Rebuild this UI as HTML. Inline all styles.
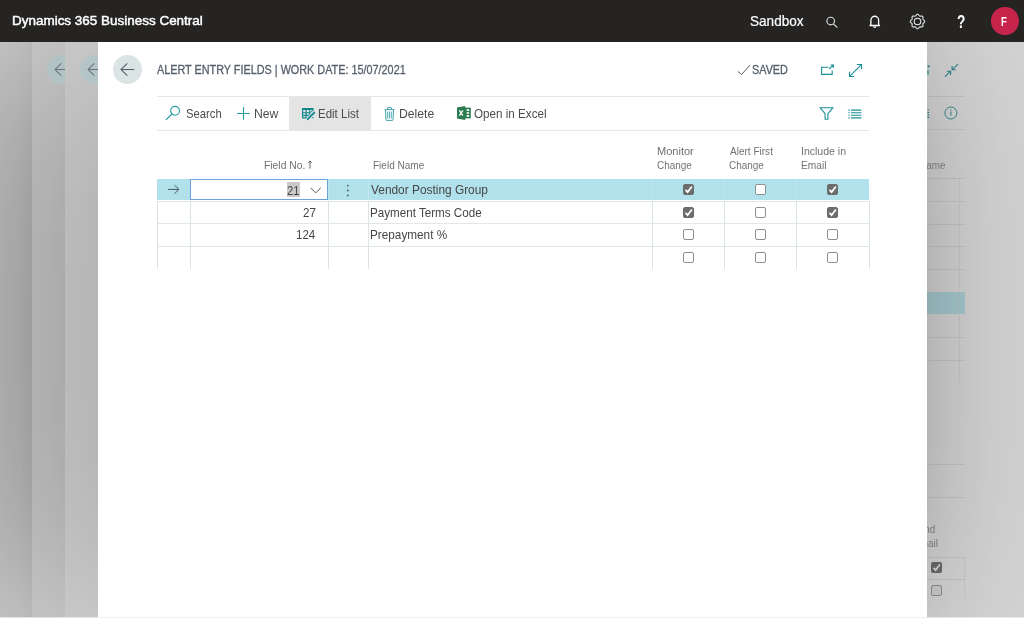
<!DOCTYPE html>
<html lang="en">
<head>
<meta charset="utf-8">
<title>Alert Entry Fields - Dynamics 365 Business Central</title>
<style>
html,body{margin:0;padding:0;}
body{width:1024px;height:618px;overflow:hidden;position:relative;background:#bdbdbd;font-family:"Liberation Sans",sans-serif;color:#212121;}
.abs{position:absolute;}
.t{position:absolute;white-space:nowrap;line-height:1;transform-origin:0 0;}
svg{position:absolute;overflow:visible;}
#topbar{left:0;top:0;width:1024px;height:42px;background:#252423;z-index:5;}
#topbar .t{color:#fff;}
#panel{left:98px;top:42px;width:829px;height:576px;background:#fff;}
.hl{position:absolute;height:1px;background:#e1e8e8;}
.vl{position:absolute;width:0;border-left:1px solid #dbe4e4;}
.vl.s{border-left:1px solid rgba(255,255,255,0.2);}
.cb{position:absolute;width:9px;height:9px;border:1px solid #8f8f8f;border-radius:2px;background:#fff;}
.cb.on{background:#6c6c6c;border-color:#6c6c6c;}
.cb svg{left:-1px;top:-1px;}
.hd{color:#717171;font-size:11px;}
.cell{color:#464646;font-size:13px;}
.act{color:#4c4c4c;font-size:13px;}
.shd{-webkit-mask-image:linear-gradient(180deg,rgba(0,0,0,0.500) 0px,rgba(0,0,0,0.595) 24px,rgba(0,0,0,0.684) 48px,rgba(0,0,0,0.764) 72px,rgba(0,0,0,0.831) 96px,rgba(0,0,0,0.885) 120px,rgba(0,0,0,0.925) 144px,rgba(0,0,0,0.953) 168px,rgba(0,0,0,0.973) 192px,rgba(0,0,0,0.984) 216px,rgba(0,0,0,0.991) 240px,rgba(0,0,0,0.995) 264px,rgba(0,0,0,0.996) 288px,rgba(0,0,0,0.995) 312px,rgba(0,0,0,0.991) 336px,rgba(0,0,0,0.984) 360px,rgba(0,0,0,0.973) 384px,rgba(0,0,0,0.953) 408px,rgba(0,0,0,0.925) 432px,rgba(0,0,0,0.885) 456px,rgba(0,0,0,0.831) 480px,rgba(0,0,0,0.764) 504px,rgba(0,0,0,0.684) 528px,rgba(0,0,0,0.595) 552px,rgba(0,0,0,0.500) 576px);mask-image:linear-gradient(180deg,rgba(0,0,0,0.500) 0px,rgba(0,0,0,0.595) 24px,rgba(0,0,0,0.684) 48px,rgba(0,0,0,0.764) 72px,rgba(0,0,0,0.831) 96px,rgba(0,0,0,0.885) 120px,rgba(0,0,0,0.925) 144px,rgba(0,0,0,0.953) 168px,rgba(0,0,0,0.973) 192px,rgba(0,0,0,0.984) 216px,rgba(0,0,0,0.991) 240px,rgba(0,0,0,0.995) 264px,rgba(0,0,0,0.996) 288px,rgba(0,0,0,0.995) 312px,rgba(0,0,0,0.991) 336px,rgba(0,0,0,0.984) 360px,rgba(0,0,0,0.973) 384px,rgba(0,0,0,0.953) 408px,rgba(0,0,0,0.925) 432px,rgba(0,0,0,0.885) 456px,rgba(0,0,0,0.831) 480px,rgba(0,0,0,0.764) 504px,rgba(0,0,0,0.684) 528px,rgba(0,0,0,0.595) 552px,rgba(0,0,0,0.500) 576px);}
</style>
</head>
<body>
<!-- background layers (stacked pages behind the dialog, dimmed, with soft edge shadows) -->
<div class="abs" id="pg0" style="left:0;top:42px;width:1024px;height:576px;background:#d6d6d6;"></div>
<div class="abs" id="peek" style="left:927px;top:42px;width:97px;height:576px;overflow:hidden;">
<div class="abs" style="left:0px;top:54px;width:38px;height:1px;background:#c3c9c9;"></div>
<div class="abs" style="left:0px;top:87.4px;width:38px;height:1px;background:#c3c9c9;"></div>
<div class="abs" style="left:0px;top:136px;width:38px;height:1px;background:#c3c9c9;"></div>
<div class="abs" style="left:0px;top:158.8px;width:38px;height:1px;background:#c3c9c9;"></div>
<div class="abs" style="left:0px;top:181.5px;width:38px;height:1px;background:#c3c9c9;"></div>
<div class="abs" style="left:0px;top:204.2px;width:38px;height:1px;background:#c3c9c9;"></div>
<div class="abs" style="left:0px;top:226.9px;width:38px;height:1px;background:#c3c9c9;"></div>
<div class="abs" style="left:0px;top:295.1px;width:38px;height:1px;background:#c3c9c9;"></div>
<div class="abs" style="left:0px;top:317.8px;width:38px;height:1px;background:#c3c9c9;"></div>
<div class="abs" style="left:0px;top:421.6px;width:38px;height:1px;background:#c3c9c9;"></div>
<div class="abs" style="left:0px;top:455.2px;width:38px;height:1px;background:#c3c9c9;"></div>
<div class="abs" style="left:0px;top:514.6px;width:38px;height:1px;background:#c3c9c9;"></div>
<div class="abs" style="left:0px;top:537px;width:38px;height:1px;background:#c3c9c9;"></div>
<div class="abs" style="left:0;top:249.7px;width:38px;height:22.8px;background:#a8cbd1;"></div>
<div class="abs" style="left:32.4px;top:136px;width:0;height:204px;border-left:1px dotted #bcc4c4;"></div>
<div class="abs" style="left:37.2px;top:515px;width:0;height:44px;border-left:1px dotted #bcc4c4;"></div>
<svg style="left:0;top:23.2px;" width="4" height="11" viewBox="0 0 4 11"><rect x="0.6" y="0.3" width="2" height="2" fill="#2f858b"/><path d="M1 5v4.8" stroke="#2f858b" stroke-width="1.1"/></svg>
<svg style="left:17px;top:21.2px;" width="15" height="15" viewBox="0 0 15 15"><path d="M0.9 13.6L6.4 8.4M2.9 8.3h3.7v3.7M14 1.2L8.3 6.6M11.8 6.7H8.1V3" fill="none" stroke="#2f858b" stroke-width="1.1"/></svg>
<svg style="left:0;top:66.7px;" width="3" height="10" viewBox="0 0 3 10"><path d="M0.5 1h1.6M0.5 3.5h1.6M0.5 5.9h1.6M0.5 8.4h1.6" stroke="#2f858b" stroke-width="1.1"/></svg>
<svg style="left:17px;top:63.7px;" width="14" height="14" viewBox="0 0 14 14"><circle cx="6.9" cy="7" r="6" fill="none" stroke="#3a8d93" stroke-width="1"/><path d="M6.9 5.6v4" stroke="#3a8d93" stroke-width="1.1"/><circle cx="6.9" cy="3.9" r="0.65" fill="#3a8d93"/></svg>
<span class="t pk" id="pk1" style="left:-7.6px;top:118px;font-size:10.7px;color:#868686;transform:scaleX(0.93);">Name</span>
<span class="t pk" id="pk2" style="left:-14.8px;top:482px;font-size:10.7px;color:#868686;transform:scaleX(0.93);">Send</span>
<span class="t pk" id="pk3" style="left:-14.3px;top:496px;font-size:10.7px;color:#868686;transform:scaleX(0.93);">Email</span>
<div class="abs" style="left:4px;top:520.1px;width:11px;height:11px;border-radius:2px;background:#6b6b6b;"><svg style="left:0;top:0" width="11" height="11" viewBox="0 0 11 11"><path d="M2.5 5.9L4.6 8.1 8.9 2.6" fill="none" stroke="#dedede" stroke-width="1.7"/></svg></div>
<div class="abs" style="left:4px;top:542.8px;width:9px;height:9px;border:1px solid #8e8e8e;border-radius:2px;background:#cdcdcd;"></div>
</div>
<div class="abs shd" id="sh1" style="left:0px;top:42px;width:32px;height:576px;background:linear-gradient(90deg,rgba(0,0,0,0.205) 0px,rgba(0,0,0,0.232) 20px,rgba(0,0,0,0.250) 27px,rgba(0,0,0,0.264) 32px);"></div>
<div class="abs shd" id="sh2" style="left:32px;top:42px;width:33px;height:576px;background:linear-gradient(90deg,rgba(0,0,0,0.172) 0px,rgba(0,0,0,0.190) 22px,rgba(0,0,0,0.205) 33px);"></div>
<div class="abs shd" id="sh3" style="left:65px;top:42px;width:33px;height:576px;background:linear-gradient(90deg,rgba(0,0,0,0.128) 0px,rgba(0,0,0,0.150) 33px);"></div>
<div class="abs shd" id="sh4" style="left:927px;top:42px;width:97px;height:576px;background:linear-gradient(90deg,rgba(0,0,0,0.158) 0px,rgba(0,0,0,0.139) 8px,rgba(0,0,0,0.122) 16px,rgba(0,0,0,0.107) 24px,rgba(0,0,0,0.094) 32px,rgba(0,0,0,0.083) 40px,rgba(0,0,0,0.073) 48px,rgba(0,0,0,0.064) 56px,rgba(0,0,0,0.056) 64px,rgba(0,0,0,0.049) 72px,rgba(0,0,0,0.043) 80px,rgba(0,0,0,0.038) 88px,rgba(0,0,0,0.034) 96px,rgba(0,0,0,0.033) 97px);"></div>
<div id="topbar" class="abs">
  <span class="t" id="brand" style="left:12.20px;top:13.60px;font-size:13px;font-weight:normal;-webkit-text-stroke:0.45px #fff;transform:scaleX(1.0356);">Dynamics 365 Business Central</span>
  <span class="t" id="sandbox" style="left:749.60px;top:13.50px;font-size:14.4px;-webkit-text-stroke:0.2px #fff;transform:scaleX(0.9422);">Sandbox</span>
<!-- top bar icons -->
<svg id="i-search" style="left:825px;top:15px;" width="14" height="14" viewBox="0 0 14 14"><circle cx="5.7" cy="6" r="3.8" fill="none" stroke="#dcdcdc" stroke-width="1.15"/><path d="M8.5 8.9L12.3 12.6" stroke="#dcdcdc" stroke-width="1.25" fill="none"/></svg>
<svg id="i-bell" style="left:868px;top:14px;" width="14" height="16" viewBox="0 0 14 16"><path d="M2.9 10.6V6.1a3.85 3.85 0 0 1 7.7 0v4.5l0.9 0.9H2z" fill="none" stroke="#fff" stroke-width="1.3" stroke-linejoin="round"/><path d="M5.4 12.3a1.4 1.4 0 0 0 2.7 0" fill="none" stroke="#fff" stroke-width="1.2"/></svg>
<svg id="i-gear" style="left:909px;top:12.9px;" width="17" height="17" viewBox="0 0 17 17"><circle cx="8.5" cy="8.5" r="3.3" fill="none" stroke="#efefef" stroke-width="1.05"/><path d="M15.75 8.50 L15.64 8.97 L15.34 9.40 L14.92 9.78 L14.49 10.10 L14.13 10.41 L13.90 10.74 L13.83 11.13 L13.87 11.60 L13.95 12.14 L13.97 12.70 L13.88 13.22 L13.63 13.63 L13.22 13.88 L12.70 13.97 L12.14 13.95 L11.60 13.87 L11.13 13.83 L10.74 13.90 L10.41 14.13 L10.10 14.49 L9.78 14.92 L9.40 15.34 L8.97 15.64 L8.50 15.75 L8.03 15.64 L7.60 15.34 L7.22 14.92 L6.90 14.49 L6.59 14.13 L6.26 13.90 L5.87 13.83 L5.40 13.87 L4.86 13.95 L4.30 13.97 L3.78 13.88 L3.37 13.63 L3.12 13.22 L3.03 12.70 L3.05 12.14 L3.13 11.60 L3.17 11.13 L3.10 10.74 L2.87 10.41 L2.51 10.10 L2.08 9.78 L1.66 9.40 L1.36 8.97 L1.25 8.50 L1.36 8.03 L1.66 7.60 L2.08 7.22 L2.51 6.90 L2.87 6.59 L3.10 6.26 L3.17 5.87 L3.13 5.40 L3.05 4.86 L3.03 4.30 L3.12 3.78 L3.37 3.37 L3.78 3.12 L4.30 3.03 L4.86 3.05 L5.40 3.13 L5.87 3.17 L6.26 3.10 L6.59 2.87 L6.90 2.51 L7.22 2.08 L7.60 1.66 L8.03 1.36 L8.50 1.25 L8.97 1.36 L9.40 1.66 L9.78 2.08 L10.10 2.51 L10.41 2.87 L10.74 3.10 L11.13 3.17 L11.60 3.13 L12.14 3.05 L12.70 3.03 L13.22 3.12 L13.63 3.37 L13.88 3.78 L13.97 4.30 L13.95 4.86 L13.87 5.40 L13.83 5.87 L13.90 6.26 L14.13 6.59 L14.49 6.90 L14.92 7.22 L15.34 7.60 L15.64 8.03Z" fill="none" stroke="#efefef" stroke-width="1.05" stroke-linejoin="round"/></svg>
<span class="t" id="qmark" style="left:957.3px;top:12.5px;font-size:18.5px;font-weight:bold;color:#fff;transform:scaleX(0.74);">?</span>
<div class="abs" id="avatar" style="left:991px;top:7px;width:27.5px;height:27.5px;border-radius:50%;background:#c7244b;"></div>
<span class="t" id="avF" style="left:1001px;top:15.5px;font-size:12px;font-weight:bold;color:#fff;transform:scaleX(0.8);">F</span>

</div>

<div id="panel" class="abs"></div>

<span class="t" id="title" style="left:156.59px;top:64.00px;font-size:12px;color:#56616c;-webkit-text-stroke:0.3px #56616c;transform:scaleX(0.9028);">ALERT ENTRY FIELDS | WORK DATE: 15/07/2021</span>
<span class="t" id="saved" style="left:752.43px;top:64.00px;font-size:12px;color:#56616c;-webkit-text-stroke:0.3px #56616c;transform:scaleX(0.9023);">SAVED</span>

<!-- toolbar -->
<div class="hl" style="left:157px;top:96px;width:712px;"></div>
<div class="hl" style="left:157px;top:130px;width:712px;"></div>
<div class="abs" id="editbg" style="left:289px;top:97px;width:82px;height:33px;background:#e4e4e4;"></div>
<span class="t act" id="a1" style="left:186.16px;top:108.00px;font-size:12.8px;transform:scaleX(0.8809);">Search</span>
<span class="t act" id="a2" style="left:253.60px;top:108.00px;font-size:12.8px;transform:scaleX(0.9524);">New</span>
<span class="t act" id="a3" style="left:317.85px;top:108.00px;font-size:12.8px;transform:scaleX(0.8977);">Edit List</span>
<span class="t act" id="a4" style="left:399.10px;top:108.00px;font-size:12.8px;transform:scaleX(0.9516);">Delete</span>
<span class="t act" id="a5" style="left:474.01px;top:108.00px;font-size:12.8px;transform:scaleX(0.9103);">Open in Excel</span>

<!-- column headers -->
<span class="t hd" id="h1" style="left:263.72px;top:160.00px;font-size:10.7px;transform:scaleX(0.9654);">Field No.</span>
<span class="t hd" id="h2" style="left:373.01px;top:160.00px;font-size:10.7px;transform:scaleX(0.9376);">Field Name</span>
<span class="t hd" id="h3a" style="left:656.99px;top:146.00px;font-size:10.7px;transform:scaleX(1.0322);">Monitor</span>
<span class="t hd" id="h3b" style="left:657.44px;top:160.00px;font-size:10.7px;transform:scaleX(0.9295);">Change</span>
<span class="t hd" id="h4a" style="left:729.64px;top:146.00px;font-size:10.7px;transform:scaleX(0.9388);">Alert First</span>
<span class="t hd" id="h4b" style="left:729.44px;top:160.00px;font-size:10.7px;transform:scaleX(0.9295);">Change</span>
<span class="t hd" id="h5a" style="left:800.66px;top:146.00px;font-size:10.7px;transform:scaleX(0.9844);">Include in</span>
<span class="t hd" id="h5b" style="left:800.79px;top:160.00px;font-size:10.7px;transform:scaleX(0.9507);">Email</span>

<!-- grid -->
<div class="abs" id="selrow" style="left:156.5px;top:178.6px;width:712.5px;height:21.3px;background:#b1e1eb;"></div>
<div class="hl" style="left:157px;top:200.5px;width:712px;"></div>
<div class="hl" style="left:157px;top:223.1px;width:712px;"></div>
<div class="hl" style="left:157px;top:245.8px;width:712px;"></div>
<div class="vl" style="left:156.6px;top:201px;height:68px;"></div>
<div class="vl" style="left:190.0px;top:201px;height:68px;"></div>
<div class="vl s" style="left:190.0px;top:179px;height:21px;"></div>
<div class="vl" style="left:328.2px;top:201px;height:68px;"></div>
<div class="vl s" style="left:328.2px;top:179px;height:21px;"></div>
<div class="vl" style="left:368.3px;top:201px;height:68px;"></div>
<div class="vl s" style="left:368.3px;top:179px;height:21px;"></div>
<div class="vl" style="left:652.2px;top:201px;height:68px;"></div>
<div class="vl s" style="left:652.2px;top:179px;height:21px;"></div>
<div class="vl" style="left:724.4px;top:201px;height:68px;"></div>
<div class="vl s" style="left:724.4px;top:179px;height:21px;"></div>
<div class="vl" style="left:796.3px;top:201px;height:68px;"></div>
<div class="vl s" style="left:796.3px;top:179px;height:21px;"></div>
<div class="vl" style="left:868.5px;top:201px;height:68px;"></div>
<div class="abs" id="inp" style="left:190px;top:179.2px;width:136px;height:18.7px;background:#fff;border:1px solid #6aa3dc;box-sizing:content-box;"></div>
<div class="abs" id="selhl" style="left:287.3px;top:182.1px;width:12.6px;height:15px;background:#c9c9c9;"></div>
<span class="t cell" id="c1" style="left:287.39px;top:184.50px;font-size:12.6px;transform:scaleX(0.8923);">21</span>
<span class="t cell" id="c2" style="left:302.72px;top:207.00px;font-size:12.6px;transform:scaleX(0.9231);">27</span>
<span class="t cell" id="c3" style="left:296.11px;top:229.00px;font-size:12.6px;transform:scaleX(0.9178);">124</span>
<span class="t cell" id="n1" style="left:370.70px;top:184.00px;font-size:12.6px;transform:scaleX(0.9435);">Vendor Posting Group</span>
<span class="t cell" id="n2" style="left:369.97px;top:207.00px;font-size:12.6px;transform:scaleX(0.9236);">Payment Terms Code</span>
<span class="t cell" id="n3" style="left:369.99px;top:229.00px;font-size:12.6px;transform:scaleX(0.9339);">Prepayment %</span>


<!-- back buttons on stacked pages -->
<div class="abs" style="left:32px;top:42px;width:33px;height:576px;overflow:hidden;">
  <div class="abs" style="left:14.7px;top:12.8px;width:29px;height:29px;border-radius:50%;background:#b3c3c5;"></div>
  <svg style="left:14.7px;top:12.8px;" width="29" height="29" viewBox="0 0 29 29"><path d="M21.2 14.5H8.3M14.3 8.3L8.1 14.5l6.2 6.2" fill="none" stroke="#66737a" stroke-width="1.05"/></svg>
</div>
<div class="abs" style="left:65px;top:42px;width:33px;height:576px;overflow:hidden;">
  <div class="abs" style="left:14.7px;top:12.8px;width:29px;height:29px;border-radius:50%;background:#b5c5c7;"></div>
  <svg style="left:14.7px;top:12.8px;" width="29" height="29" viewBox="0 0 29 29"><path d="M21.2 14.5H8.3M14.3 8.3L8.1 14.5l6.2 6.2" fill="none" stroke="#66737a" stroke-width="1.05"/></svg>
</div>
<!-- main back button -->
<div class="abs" id="backbtn" style="left:112.7px;top:54.8px;width:29px;height:29px;border-radius:50%;background:#dbe4e4;"></div>
<svg style="left:112.7px;top:54.8px;" width="29" height="29" viewBox="0 0 29 29"><path d="M21.2 14.5H8.3M14.3 8.3L8.1 14.5l6.2 6.2" fill="none" stroke="#4b5b64" stroke-width="1.05"/></svg>

<!-- saved check + header icons -->
<svg id="i-check" style="left:737px;top:64px;" width="14" height="12" viewBox="0 0 14 12"><path d="M0.9 7.4L4.5 10.6L13 1.1" fill="none" stroke="#5a5a5a" stroke-width="1"/></svg>
<svg id="i-popout" style="left:820px;top:64px;" width="15" height="12" viewBox="0 0 15 12"><path d="M8.5 3.2H1.6v7.2h10.6V6.6" fill="none" stroke="#1b9098" stroke-width="1.1"/><path d="M9.2 5L13.2 1.2M10.6 1h2.8v2.8" fill="none" stroke="#1b9098" stroke-width="1.1"/></svg>
<svg id="i-expand" style="left:848px;top:63px;" width="15" height="15" viewBox="0 0 15 15"><path d="M1.6 13.4L13.4 1.6M8.8 1.5h4.7v4.7M6.2 13.5H1.5V8.8" fill="none" stroke="#1b9098" stroke-width="1.1"/></svg>

<!-- toolbar icons -->
<svg id="i-tsearch" style="left:165px;top:105px;" width="16" height="16" viewBox="0 0 16 16"><circle cx="10.1" cy="5.8" r="4.4" fill="none" stroke="#2298a0" stroke-width="1.1"/><path d="M7 9L0.9 14.8" stroke="#2298a0" stroke-width="1.1" fill="none"/></svg>
<svg id="i-plus" style="left:237px;top:107px;" width="13" height="13" viewBox="0 0 13 13"><path d="M6.5 0.3v12.4M0.2 6.5h12.6" stroke="#2298a0" stroke-width="1.1" fill="none"/></svg>
<svg id="i-editlist" style="left:301.5px;top:107.8px;" width="14" height="13" viewBox="0 0 14 13"><path d="M0 0h11.6v2H0z" fill="#12878e"/><path d="M0.6 2v8.3M4.1 2v8.3M7.7 2v5M11 2v1.8M0 4.7h8.6M0 7.3h7M0 9.8h5.6" fill="none" stroke="#12878e" stroke-width="1.15"/><path d="M5.6 11.3L12.4 4.5" stroke="#e4e4e4" stroke-width="3.6" stroke-linecap="round" fill="none"/><path d="M5.7 11.2L12.3 4.6" stroke="#12878e" stroke-width="1.9" stroke-linecap="round" fill="none"/><circle cx="10.9" cy="9.8" r="0.7" fill="#12878e"/><circle cx="9.4" cy="3.7" r="0.6" fill="#12878e"/></svg>
<svg id="i-trash" style="left:384px;top:107.3px;" width="11" height="14" viewBox="0 0 11 14"><path d="M0.6 2.6h9.8M3.6 2.4V1a.5.5 0 0 1 .5-.5h2.8a.5.5 0 0 1 .5.5v1.4M1.5 2.8l.5 10.1a.5.5 0 0 0 .5.5h6a.5.5 0 0 0 .5-.5l.5-10.1" fill="none" stroke="#3ea4ab" stroke-width="1"/><path d="M3.7 4.6v6.8M5.5 4.6v6.8M7.3 4.6v6.8" stroke="#3ea4ab" stroke-width="0.9" fill="none"/></svg>
<svg id="i-excel" style="left:457px;top:106px;" width="14" height="14" viewBox="0 0 14 14"><path d="M7.6 1.6h6.2v10.8H7.6z" fill="#2a7b4e"/><path d="M0 1.6L8.2 0v14L0 12.4z" fill="#2a7b4e"/><path d="M2.3 4.3l3.6 5.4M5.9 4.3L2.3 9.7" stroke="#fff" stroke-width="1.3" fill="none"/><path d="M9.6 3.3h2.6v1.6H9.6zM9.6 6.2h2.6v1.6H9.6zM9.6 9.1h2.6v1.6H9.6z" fill="#fff"/></svg>
<svg id="i-filter" style="left:819px;top:106.5px;" width="15" height="13" viewBox="0 0 15 13"><path d="M0.9 0.7h13.2L8.9 6.6v5.6H6.1V6.6z" fill="none" stroke="#1b9098" stroke-width="1.1" stroke-linejoin="round"/></svg>
<svg id="i-list" style="left:848px;top:109px;" width="14" height="10" viewBox="0 0 14 10"><path d="M3 1.1h10.4M3 3.7h10.4M3 6.3h10.4M3 8.9h10.4" stroke="#1b9098" stroke-width="1.1" fill="none"/><path d="M0.4 1.1h1.3M0.4 3.7h1.3M0.4 6.3h1.3M0.4 8.9h1.3" stroke="#1b9098" stroke-width="1.1" fill="none"/></svg>

<!-- sort arrow -->
<svg id="i-sort" style="left:307.2px;top:160px;" width="6" height="9" viewBox="0 0 6 9"><path d="M3 8.7V1M1.3 2.9L3 0.9 4.7 2.9" fill="none" stroke="#666" stroke-width="1"/></svg>
<!-- row arrow -->
<svg id="i-rowarrow" style="left:167px;top:184px;" width="13" height="11" viewBox="0 0 13 11"><path d="M1 5.4h10.9M7.5 1.2l4.4 4.2-4.4 4.3" fill="none" stroke="#45555d" stroke-width="1"/></svg>
<!-- chevron in input -->
<svg id="i-chev" style="left:310px;top:187px;" width="12" height="7" viewBox="0 0 12 7"><path d="M0.6 0.8L5.7 5.9 10.8 0.8" fill="none" stroke="#5a5a5a" stroke-width="1"/></svg>
<!-- more (vertical dots) -->
<svg id="i-dots" style="left:346px;top:184px;" width="4" height="13" viewBox="0 0 4 13"><circle cx="1.8" cy="1.6" r="0.9" fill="#4a5a60"/><circle cx="1.8" cy="6.5" r="0.9" fill="#4a5a60"/><circle cx="1.8" cy="11.4" r="0.9" fill="#4a5a60"/></svg>
<div class="cb on" style="left:683.2px;top:184.2px;"><svg width="11" height="11" viewBox="0 0 11 11"><path d="M2.5 5.9L4.6 8.1 8.9 2.6" fill="none" stroke="#fff" stroke-width="1.7"/></svg></div>
<div class="cb" style="left:755.3px;top:184.2px;"></div>
<div class="cb on" style="left:827.1px;top:184.2px;"><svg width="11" height="11" viewBox="0 0 11 11"><path d="M2.5 5.9L4.6 8.1 8.9 2.6" fill="none" stroke="#fff" stroke-width="1.7"/></svg></div>
<div class="cb on" style="left:683.2px;top:206.8px;"><svg width="11" height="11" viewBox="0 0 11 11"><path d="M2.5 5.9L4.6 8.1 8.9 2.6" fill="none" stroke="#fff" stroke-width="1.7"/></svg></div>
<div class="cb" style="left:755.3px;top:206.8px;"></div>
<div class="cb on" style="left:827.1px;top:206.8px;"><svg width="11" height="11" viewBox="0 0 11 11"><path d="M2.5 5.9L4.6 8.1 8.9 2.6" fill="none" stroke="#fff" stroke-width="1.7"/></svg></div>
<div class="cb" style="left:683.2px;top:229.4px;"></div>
<div class="cb" style="left:755.3px;top:229.4px;"></div>
<div class="cb" style="left:827.1px;top:229.4px;"></div>
<div class="cb" style="left:683.2px;top:252.0px;"></div>
<div class="cb" style="left:755.3px;top:252.0px;"></div>
<div class="cb" style="left:827.1px;top:252.0px;"></div>
<div class="abs" id="bstrip" style="left:0;top:616.6px;width:1024px;height:2px;background:rgba(255,255,255,0.55);"></div>
<div class="abs" id="bstrip2" style="left:98px;top:616.6px;width:829px;height:2px;background:#f1f1f1;"></div>
</body>
</html>
